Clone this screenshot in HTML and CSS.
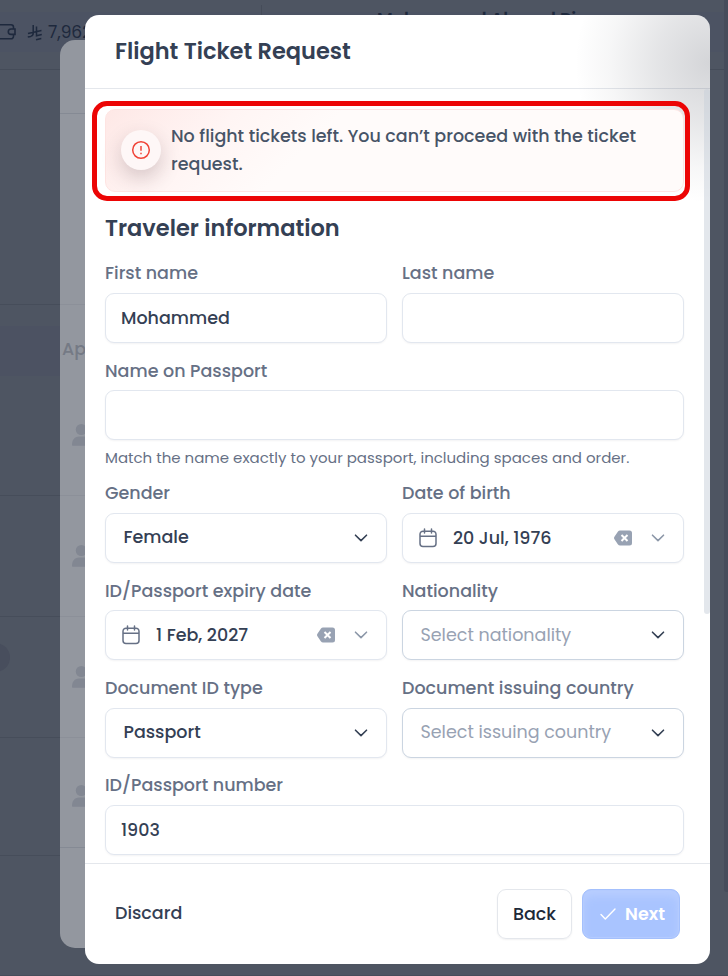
FILE: index.html
```
<!DOCTYPE html>
<html lang="en">
<head>
    <meta charset="UTF-8">
    <meta name="viewport" content="width=device-width, initial-scale=1.0">
    <title>Flight Ticket Request</title>
    <link rel="stylesheet" href="styles.css">
</head>
<body>
    <!-- icons -->
    <svg class="sprite" width="0" height="0">
        <symbol id="chevron" viewBox="0 0 14 8"><path d="M1.500 1.200 7 6.600l5.500-5.400" fill="none" stroke="currentColor" stroke-width="1.600" stroke-linecap="round" stroke-linejoin="round"/></symbol>
        <symbol id="calendar" viewBox="0 0 18 20"><path d="M4 3.200h10a3 3 0 0 1 3 3V15.500a3 3 0 0 1-3 3H4a3 3 0 0 1-3-3V6.200a3 3 0 0 1 3-3zM1 8.200h16M5.500 1v4M12.500 1v4" fill="none" stroke="currentColor" stroke-width="1.500" stroke-linecap="round"/></symbol>
        <symbol id="clear" viewBox="0 0 18 16"><path d="M6 .5h9.500A2.500 2.500 0 0 1 18 3v10a2.500 2.500 0 0 1-2.500 2.500H6a2.500 2.500 0 0 1-2-1L.6 9.400a2.200 2.200 0 0 1 0-2.800L4 1.500a2.500 2.500 0 0 1 2-1z" fill="currentColor"/><path d="m7.500 5 6 6m0-6-6 6" stroke="#fff" stroke-width="2"/></symbol>
        <symbol id="person" viewBox="0 0 20 24"><circle cx="9.300" cy="6.500" r="5.500"/><path d="M0 22c0-5 2.500-8.500 7-8.500h5c4.500 0 7 3.500 7 8.500 0 .4-.3.700-.7.700H.7C.3 22.700 0 22.400 0 22z"/></symbol>
    </svg>

    <div class="page">
        <div class="topbar">
            <svg class="wallet" width="16" height="20" viewBox="0 0 16 20" fill="none" stroke="currentColor" stroke-width="1.600"><path d="M-4 2.800H11a2.500 2.500 0 0 1 2.500 2.500v1.500M13.500 12.500v1.800a2.500 2.500 0 0 1-2.500 2.500H-4M15 7h-4a2.700 2.700 0 0 0 0 5.400h4z"/></svg>
            <svg class="riyal" width="16" height="17" viewBox="0 0 16 17" fill="none" stroke="currentColor" stroke-width="1.500"><path d="M6.200 1v8.500c0 1.500-1 2.500-2.500 2.900L.8 13M9.500 2.500v9.300l5.300-1.200M1 9.500l13.500-3M9 15.700l5.300-1.200"/></svg>
            <span class="balance">7,962</span>
            <span class="divider"></span>
            <span class="user">Mohammed Ahmed Bi</span>
        </div>
        <div class="page-row intro"></div>
        <div class="page-row tall"><div class="band"></div></div>
        <div class="page-row"></div>
        <div class="page-row"><span class="dot"></span></div>
        <div class="page-row short"></div>
    </div>
    <div class="page-scroll"></div>
    <div class="page-bottom"></div>

    <div class="panel">
        <div class="panel-head"></div>
        <div class="panel-row filters"></div>
        <div class="panel-row first"><span>Ap</span><svg><use href="#person"/></svg></div>
        <div class="panel-row"><svg><use href="#person"/></svg></div>
        <div class="panel-row"><svg><use href="#person"/></svg></div>
        <div class="panel-row last"><svg><use href="#person"/></svg></div>
    </div>

    <div class="modal">
        <div class="modal-header">
            <h1>Flight Ticket Request</h1>
        </div>
        <div class="modal-body">
            <div class="highlight">
                <div class="alert">
                    <div class="alert-icon">
                        <svg width="20" height="20" viewBox="0 0 20 20" fill="none" stroke="#f04438" stroke-width="1.500"><circle cx="10" cy="10" r="8.300"/><path d="M10 6v4.800M10 12.700v1.500"/></svg>
                    </div>
                    <p>No flight tickets left. You can’t proceed with the ticket<br>request.</p>
                </div>
            </div>
            <h2>Traveler information</h2>
            <form class="form">
                <div class="field">
                    <label>First name</label>
                    <div class="input"><span>Mohammed</span></div>
                </div>
                <div class="field">
                    <label>Last name</label>
                    <div class="input"></div>
                </div>
                <div class="field full">
                    <label>Name on Passport</label>
                    <div class="input"></div>
                    <p class="hint">Match the name exactly to your passport, including spaces and order.</p>
                </div>
                <div class="field">
                    <label>Gender</label>
                    <div class="input select"><span>Female</span><svg class="chevron"><use href="#chevron"/></svg></div>
                </div>
                <div class="field">
                    <label>Date of birth</label>
                    <div class="input date"><svg class="calendar"><use href="#calendar"/></svg><span>20 Jul, 1976</span><svg class="clear"><use href="#clear"/></svg><svg class="chevron"><use href="#chevron"/></svg></div>
                </div>
                <div class="field">
                    <label>ID/Passport expiry date</label>
                    <div class="input date"><svg class="calendar"><use href="#calendar"/></svg><span>1 Feb, 2027</span><svg class="clear"><use href="#clear"/></svg><svg class="chevron"><use href="#chevron"/></svg></div>
                </div>
                <div class="field">
                    <label>Nationality</label>
                    <div class="input select empty"><span>Select nationality</span><svg class="chevron"><use href="#chevron"/></svg></div>
                </div>
                <div class="field">
                    <label>Document ID type</label>
                    <div class="input select"><span>Passport</span><svg class="chevron"><use href="#chevron"/></svg></div>
                </div>
                <div class="field">
                    <label>Document issuing country</label>
                    <div class="input select empty"><span>Select issuing country</span><svg class="chevron"><use href="#chevron"/></svg></div>
                </div>
                <div class="field full">
                    <label>ID/Passport number</label>
                    <div class="input"><span>1903</span></div>
                </div>
            </form>
        </div>
        <div class="modal-footer">
            <span class="discard">Discard</span>
            <span class="btn back">Back</span>
            <span class="btn next"><svg width="16" height="12" viewBox="0 0 16 12" fill="none" stroke="#fff" stroke-width="1.400" stroke-linecap="round" stroke-linejoin="round"><path d="M1 6.500 5.300 11 15 1"/></svg>Next</span>
        </div>
        <div class="glow"></div>
        <div class="scrollbar"></div>
    </div>
</body>
</html>
```

FILE: styles.css
```
* {
    box-sizing: border-box;
}
body {
    margin: 0;
    height: 976px;
    overflow: hidden;
    position: relative;
    background-color: #4e5562;
    font-family: Poppins, Inter, sans-serif;
    font-size: 17.5px;
    font-weight: 500;
    color: #344054;
}
h1, h2, p {
    margin: 0;
}
svg {
    display: block;
    flex: none;
}
.sprite {
    position: absolute;
}

/* dimmed page */
.page {
    color: #1e293d;
}
.topbar {
    display: flex;
    height: 70px;
    border-bottom: 1px solid #454c59;
    background: linear-gradient(#4e5562 12px, #4c5363 12px, #4c5363 52px, #4e5562 52px);
}
.wallet {
    margin-top: 22px;
}
.riyal {
    margin: 24px 0 0 11px;
}
.balance {
    margin: 22px 0 0 5px;
    width: 45px;
    font-size: 17px;
    line-height: 20px;
    font-weight: 400;
}
.divider {
    width: 1px;
    height: 20px;
    margin: 5px 0 0 168px;
    background: #454c59;
}
.user {
    margin: 9px 0 0 115px;
    line-height: 21px;
    font-weight: 600;
    white-space: nowrap;
}
.page-row {
    width: 85px;
    height: 121px;
    border-bottom: 1px solid #464d5a;
}
.page-row.intro {
    height: 235px;
}
.page-row.tall {
    height: 191px;
    padding-top: 21px;
}
.page-row.short {
    height: 118px;
}
.band {
    height: 50px;
    background: #4c5262;
}
.page-row .dot {
    display: block;
    width: 29px;
    height: 29px;
    margin: 26px 0 0 -19px;
    border-radius: 50%;
    background: #484e5d;
}
.page-row:has(.dot) {
    display: flow-root;
}
.page-scroll {
    position: absolute;
    top: 0;
    right: 0;
    width: 4px;
    height: 892px;
    background: #464c5b;
    border-bottom-left-radius: 3px;
}
.page-bottom {
    position: absolute;
    left: 0;
    right: 0;
    bottom: 0;
    height: 1px;
    background: #474d5a;
}

/* drawer behind the modal */
.panel {
    position: absolute;
    left: 60px;
    top: 40px;
    width: 40px;
    height: 908px;
    border-radius: 15px 0 0 15px;
    overflow: hidden;
    background: #93979f;
    color: #757a85;
}
.panel-head {
    height: 74px;
    border-bottom: 1px solid #858a94;
}
.panel-row {
    height: 121px;
    padding: 48px 0 0 12px;
    border-bottom: 1px solid #8c9099;
}
.panel-row.filters {
    height: 191px;
}
.panel-row.first {
    padding-top: 32px;
    height: 191px;
}
.panel-row.first span {
    display: block;
    line-height: 24px;
    margin: 0 0 62px -10px;
}
.panel-row.last {
    height: 110px;
    padding-top: 46px;
    border-color: #858a94;
}
.panel-row svg {
    width: 20px;
    height: 24px;
    fill: #828792;
}

/* modal */
.modal {
    position: absolute;
    left: 85px;
    top: 15px;
    width: 625px;
    height: 949px;
    display: flex;
    flex-direction: column;
    border-radius: 14px;
    overflow: hidden;
    background: #fff;
}
.modal-header {
    height: 74px;
    padding: 0 30px;
    border-bottom: 1px solid #e4e7ec;
}
.modal-header h1 {
    font-size: 22.5px;
    line-height: 72px;
    font-weight: 600;
}
.modal-body {
    height: 774px;
    padding: 12px 20px 0 7px;
}
.highlight {
    width: 598px;
    height: 100px;
    padding: 3px 0 0 8px;
    border: 5px solid #ec0505;
    border-radius: 15px;
    position: relative;
    z-index: 1;
}
.alert {
    display: flex;
    width: 579px;
    height: 83px;
    padding: 12px 15px;
    border: 1px solid #fee4e2;
    border-radius: 10px;
    background: linear-gradient(135deg, #fee8e6 0, #fff5f4 20%, #fffbfa 36%);
    color: #475467;
}
.alert-icon {
    display: flex;
    align-items: center;
    justify-content: center;
    width: 40px;
    height: 40px;
    margin: 8px 10px 0 0;
    border-radius: 50%;
    background: #fef7f7;
    box-shadow: 0 8px 20px rgba(70, 40, 50, .22);
}
.alert p {
    line-height: 28px;
    white-space: nowrap;
}
h2 {
    margin: 14px 0 0 13px;
    font-size: 22.5px;
    line-height: 27px;
    font-weight: 600;
}
.form {
    display: grid;
    grid-template-columns: 282px 282px;
    gap: 15.45px 15px;
    margin: 19px 0 0 13px;
}
.full {
    grid-column: span 2;
}
.field label {
    display: block;
    height: 24px;
    padding-top: .3px;
    margin-bottom: 8px;
    line-height: 24px;
    color: #667085;
}
.input {
    display: flex;
    align-items: center;
    height: 50px;
    padding: 0 18px 0 15px;
    border: 1px solid #e2e7ef;
    border-radius: 9px;
    background: #fff;
    box-shadow: 0 1px 2px rgba(16, 24, 40, .05);
}
.select {
    padding-left: 17.5px;
}
.select span {
    margin-top: -1px;
}
.empty {
    border-color: #cbd5e1;
}
.empty span {
    color: #98a2b3;
    font-weight: 400;
}
.date span {
    margin-left: 16px;
}
.calendar {
    width: 18px;
    height: 20px;
    margin-left: 1px;
    color: #667085;
}
.clear {
    width: 18px;
    height: 16px;
    margin-left: auto;
    color: #98a2b3;
}
.chevron {
    width: 14px;
    height: 8px;
    margin-left: auto;
    color: #344054;
}
.date .chevron {
    margin-left: 19px;
    color: #8c97a8;
}
.hint {
    margin: 7.3px 0 -2.3px;
    font-size: 15px;
    line-height: 20px;
    font-weight: 400;
    color: #667085;
    white-space: nowrap;
}
.modal-footer {
    display: flex;
    height: 101px;
    padding: 25px 30px 0;
    border-top: 1px solid #e4e7ec;
}
.discard {
    margin-right: auto;
    line-height: 49px;
}
.btn {
    display: flex;
    align-items: center;
    justify-content: center;
    height: 50px;
    border-radius: 9px;
}
.back {
    width: 75px;
    border: 1px solid #e4e7ec;
    box-shadow: 0 1px 2px rgba(16, 24, 40, .06);
    color: #1d2939;
}
.next {
    width: 98px;
    margin-left: 10px;
    padding-left: 3px;
    gap: 9px;
    border: 1px solid #a4c0fd;
    background: #a9c4ff;
    box-shadow: inset 0 0 0 1px #b4cbff, inset 0 6px 10px #b9ceff;
    color: #fff;
    font-weight: 600;
}
.glow {
    position: absolute;
    top: 0;
    right: 0;
    width: 140px;
    height: 190px;
    background: radial-gradient(ellipse 135px 140px at 100% 48px, rgba(40, 45, 60, .2), rgba(40, 45, 60, .12) 40%, rgba(40, 45, 60, .04) 75%, transparent);
}
.scrollbar {
    position: absolute;
    top: 74px;
    right: 0;
    width: 6px;
    height: 525px;
    border-radius: 3px;
    background: rgba(200, 207, 217, .5);
}
```
